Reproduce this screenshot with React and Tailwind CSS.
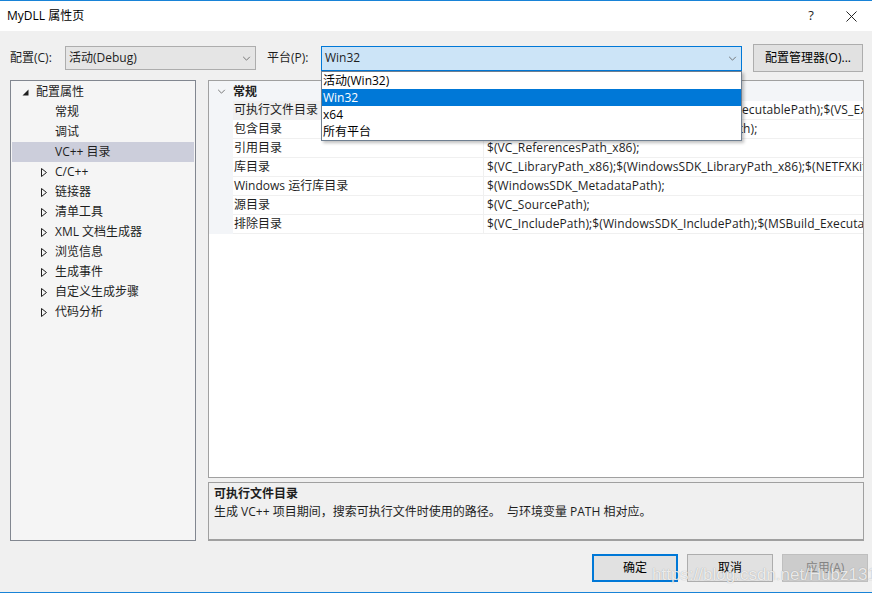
import React from 'react';

const FONT = { fontFamily: '"Open Sans","Noto Sans CJK SC",sans-serif' };

const Chevron = ({ className = '' }) => (
  <svg viewBox="0 0 10 6" className={className} fill="none" stroke="#606060" strokeWidth="1">
    <path d="M1 1l4 4 4-4" />
  </svg>
);

const TreeArrow = ({ open }) =>
  open ? (
    <svg viewBox="0 0 7 7" className="w-[7px] h-[7px]">
      <path d="M6.5 0.5v6h-6z" fill="#1e1e1e" />
    </svg>
  ) : (
    <svg viewBox="0 0 6 9" className="w-[6px] h-[9px]">
      <path d="M0.5 0.5l5 4-5 4z" fill="none" stroke="#1e1e1e" strokeWidth="1" />
    </svg>
  );

const tree = [
  { label: '配置属性', level: 0, open: true },
  { label: '常规', level: 1 },
  { label: '调试', level: 1 },
  { label: 'VC++ 目录', level: 1, selected: true },
  { label: 'C/C++', level: 1, collapsed: true },
  { label: '链接器', level: 1, collapsed: true },
  { label: '清单工具', level: 1, collapsed: true },
  { label: 'XML 文档生成器', level: 1, collapsed: true },
  { label: '浏览信息', level: 1, collapsed: true },
  { label: '生成事件', level: 1, collapsed: true },
  { label: '自定义生成步骤', level: 1, collapsed: true },
  { label: '代码分析', level: 1, collapsed: true },
];

const props = [
  ['可执行文件目录', '$(VC_ExecutablePath_x86);$(WindowsSDK_ExecutablePath);$(VS_ExecutablePath);$(MSBuild_ExecutablePath);', true],
  ['包含目录', '$(VC_IncludePath);$(WindowsSDK_IncludePath);'],
  ['引用目录', '$(VC_ReferencesPath_x86);'],
  ['库目录', '$(VC_LibraryPath_x86);$(WindowsSDK_LibraryPath_x86);$(NETFXKitsDir)Lib\\um\\x86'],
  ['Windows 运行库目录', '$(WindowsSDK_MetadataPath);'],
  ['源目录', '$(VC_SourcePath);'],
  ['排除目录', '$(VC_IncludePath);$(WindowsSDK_IncludePath);$(MSBuild_ExecutablePath);$(VC_LibraryPath_x86);'],
];

const platforms = ['活动(Win32)', 'Win32', 'x64', '所有平台'];

export default function App() {
  return (
    <div
      className="relative w-[872px] h-[593px] overflow-hidden bg-[#f0f0f0] text-[12px] text-[#1e1e1e] flex flex-col border-t border-b border-[#1883d7]"
      style={FONT}
    >
      {/* Title bar */}
      <div className="h-[30px] bg-white flex items-center pl-[7px] shrink-0">
        <span className="flex-1 text-black">MyDLL 属性页</span>
        <span className="w-[20px] text-center text-[13px] mr-[25px]">?</span>
        <svg viewBox="0 0 12 12" className="w-[11px] h-[11px] mr-[15px]" stroke="#111" strokeWidth="1">
          <path d="M0.5 0.5l11 11M11.5 0.5l-11 11" />
        </svg>
      </div>

      {/* Config row */}
      <div className="relative flex items-center h-[28px] mt-[13px] pl-[10px] shrink-0">
        <span className="w-[55px]">配置(C):</span>
        <div className="w-[191px] h-[24px] border border-[#adadad] bg-[#e5e5e5] flex items-center pl-[3px] pr-[4px]">
          <span className="flex-1">活动(Debug)</span>
          <Chevron className="w-[9px] h-[5px]" />
        </div>
        <span className="ml-[11px] w-[54px]">平台(P):</span>
        <div className="relative w-[421px] h-[25px] border border-[#0078d7] bg-[#cce4f7] flex items-center pl-[3px] pr-[4px]">
          <span className="flex-1">Win32</span>
          <Chevron className="w-[9px] h-[5px]" />
          {/* Dropdown list */}
          <div className="absolute left-[-1px] top-[24px] w-[421px] bg-white border border-[#6f7f91] shadow-[2px_2px_3px_rgba(0,0,0,0.25)] z-10">
            {platforms.map((p) => (
              <div
                key={p}
                className={
                  'h-[17px] leading-[17px] pl-[1px] ' + (p === 'Win32' ? 'bg-[#0078d7] text-white' : 'text-black')
                }
              >
                {p}
              </div>
            ))}
          </div>
        </div>
        <div className="ml-[11px] w-[110px] h-[28px] border border-[#adadad] bg-[#e1e1e1] flex items-center justify-center text-black">
          配置管理器(O)...
        </div>
      </div>

      {/* Main area */}
      <div className="flex mt-[8px] pl-[10px] h-[461px] shrink-0">
        {/* Tree */}
        <div className="w-[186px] h-full border border-[#828790] bg-[#f5f5f5] p-px">
          {tree.map((t) => (
            <div
              key={t.label}
              className={'h-[20px] flex items-center ' + (t.selected ? 'bg-[#cccedb]' : '')}
            >
              {t.level === 0 ? (
                <>
                  <span className="w-[24px] flex justify-end pr-[7px] pt-[1px]">
                    <TreeArrow open />
                  </span>
                  <span>{t.label}</span>
                </>
              ) : (
                <>
                  <span className="w-[43px] flex justify-end pr-[8px]">
                    {t.collapsed && <TreeArrow />}
                  </span>
                  <span>{t.label}</span>
                </>
              )}
            </div>
          ))}
        </div>

        {/* Right column */}
        <div className="ml-[12px] w-[656px] flex flex-col">
          <div className="h-[398px] border border-[#a0a0a0] bg-white overflow-hidden">
            <div className="h-[20px] pt-px bg-[#f3f5f8] flex items-center">
              <span className="w-[24px] flex justify-center">
                <Chevron className="w-[9px] h-[5px]" />
              </span>
              <span className="font-bold">常规</span>
            </div>
            {props.map(([name, value, sel]) => (
              <div key={name} className="h-[19px] flex bg-[#f3f5f8]">
                <div
                  className={
                    'ml-[24px] w-[250px] pl-px border-b border-[#f0f0f0] flex items-center whitespace-nowrap ' +
                    (sel ? 'bg-[#f0f0f0]' : 'bg-white')
                  }
                >
                  {name}
                </div>
                <div className="flex-1 border-l border-b border-[#f0f0f0] bg-white flex items-center pl-[3px] whitespace-nowrap overflow-hidden tracking-[0.1px]">
                  {value}
                </div>
              </div>
            ))}
          </div>
          <div className="mt-[4px] h-[59px] border border-[#a0a0a0] border-b-2 border-b-[#a0a0a0] bg-[#f0f0f0] px-[5px] pt-[2px]">
            <div className="font-bold h-[18px] leading-[18px]">可执行文件目录</div>
            <div className="h-[18px] leading-[18px] whitespace-pre">生成 VC++ 项目期间，搜索可执行文件时使用的路径。  与环境变量 PATH 相对应。</div>
          </div>
        </div>
      </div>

      {/* Buttons */}
      <div className="flex justify-end gap-[9px] pr-[4px] mt-[13px] shrink-0">
        <div className="w-[86px] h-[28px] border-2 border-[#0078d7] bg-[#e1e1e1] flex items-center justify-center text-black">
          确定
        </div>
        <div className="w-[86px] h-[28px] border border-[#adadad] bg-[#e1e1e1] flex items-center justify-center text-black">
          取消
        </div>
        <div className="w-[86px] h-[28px] border border-[#bfbfbf] bg-[#cccccc] flex items-center justify-center text-[#838383]">
          应用(A)
        </div>
      </div>

      {/* Watermark */}
      <span
        className="absolute left-[652px] top-[561px] text-[17px] text-white/80 [text-shadow:0_0_1px_rgba(0,0,0,0.35)] pointer-events-none"
        style={{ fontFamily: '"Liberation Sans",sans-serif' }}
      >
        https://blog.csdn.net/Hubz131
      </span>
    </div>
  );
}
